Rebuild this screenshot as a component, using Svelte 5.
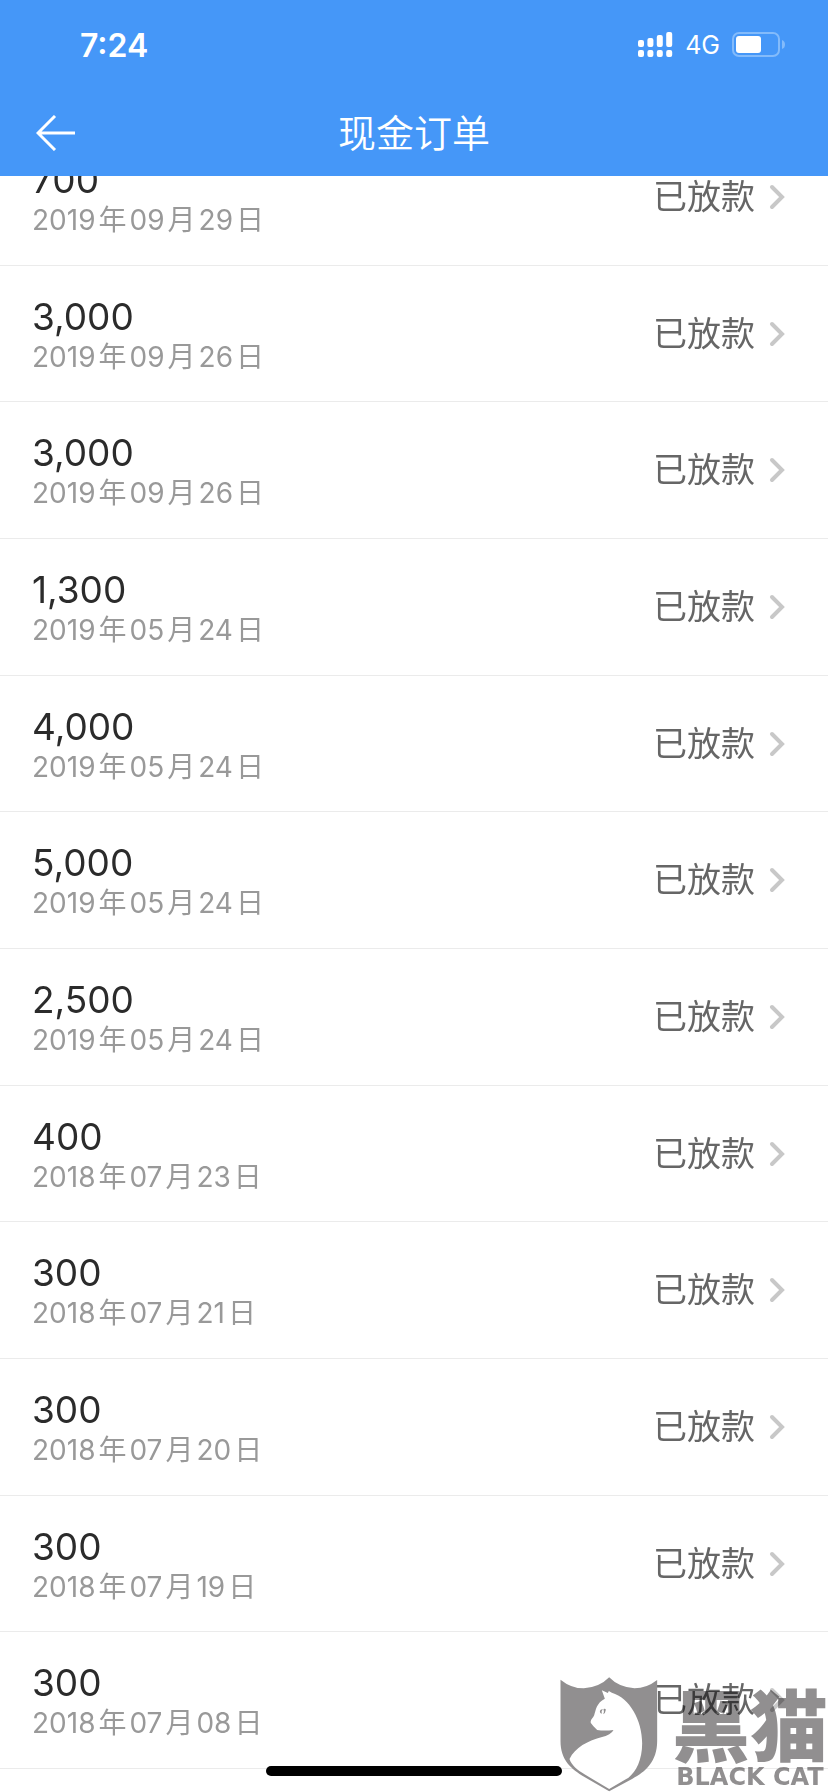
<script lang="ts">
let orders = [
  { amount: '700', date: '2019年09月29日', status: '已放款' },
  { amount: '3,000', date: '2019年09月26日', status: '已放款' },
  { amount: '3,000', date: '2019年09月26日', status: '已放款' },
  { amount: '1,300', date: '2019年05月24日', status: '已放款' },
  { amount: '4,000', date: '2019年05月24日', status: '已放款' },
  { amount: '5,000', date: '2019年05月24日', status: '已放款' },
  { amount: '2,500', date: '2019年05月24日', status: '已放款' },
  { amount: '400', date: '2018年07月23日', status: '已放款' },
  { amount: '300', date: '2018年07月21日', status: '已放款' },
  { amount: '300', date: '2018年07月20日', status: '已放款' },
  { amount: '300', date: '2018年07月19日', status: '已放款' },
  { amount: '300', date: '2018年07月08日', status: '已放款' },
];

// signal columns, shortest first
let bars = [7, 9, 12, 15];

// numbers and 年/月/日 apart, so they get some air between them
function dateParts(date: string) {
  return date.match(/\d+|\D/g) ?? [];
}
</script>

<style>
:global(body) {
  background: #fff;
}
.orders-page {
  position: relative;
  display: flex;
  flex-direction: column;
  min-height: 100vh;
  box-sizing: border-box;
  padding-bottom: 23px;
  overflow: hidden;
  color: #2b2b2b;
  font-family: Inter, 'Noto Sans CJK SC', sans-serif;
}
button {
  border: 0;
  padding: 0;
  background: none;
  color: inherit;
  font: inherit;
  cursor: pointer;
}
svg {
  display: block;
}

.top {
  position: sticky;
  top: 0;
  z-index: 1;
  background: #4597f8;
  color: #fff;
}
.status-bar {
  display: flex;
  align-items: center;
  justify-content: space-between;
  height: 90px;
  padding: 0 43px 0 80px;
}
.time {
  font-size: 32px;
  font-weight: 600;
}
.indicators {
  display: flex;
  align-items: center;
  gap: 12px;
  font-size: 25px;
  line-height: 32px;
}
.nav {
  display: grid;
  grid-template-columns: 80px 1fr 80px;
  align-items: center;
  height: 86px;
}
.back {
  padding-left: 36px;
}
h1 {
  margin: 0;
  text-align: center;
  font-size: 38px;
  line-height: 86px;
  font-weight: 350;
}

/* the list is scrolled part of a row under the header */
.orders {
  display: flex;
  flex: 1;
  flex-direction: column;
  margin: -47px 0 0;
  padding: 0;
  list-style: none;
}
.orders li {
  display: flex;
  flex: 1;
  border-bottom: 1px solid #ebebeb;
}
.order {
  display: flex;
  flex: 1;
  align-items: center;
  justify-content: space-between;
  padding: 24px 43px 24px 32px;
  text-align: left;
}
.amount {
  display: block;
  font-size: 37px;
  line-height: 46px;
}
.date {
  display: flex;
  gap: 3px;
  color: #999;
  font-size: 28px;
  line-height: 34px;
  font-weight: 400;
}
.status {
  display: flex;
  align-items: center;
  gap: 14px;
  color: #666;
  font-size: 34px;
  line-height: 44px;
  font-weight: 400;
}

.home-indicator {
  position: absolute;
  bottom: 16px;
  left: 50%;
  width: 296px;
  height: 10px;
  margin-left: -148px;
  border-radius: 5px;
  background: #000;
}
.watermark {
  position: absolute;
  right: 0;
  bottom: 0;
  display: flex;
  align-items: flex-end;
  gap: 14px;
  color: #918f90;
  pointer-events: none;
}
.brand {
  display: flex;
  flex-direction: column;
  align-items: center;
  mix-blend-mode: multiply;
}
.brand-cn {
  font-family: 'Noto Sans CJK SC', sans-serif;
  font-size: 78px;
  line-height: 80px;
  font-weight: 900;
}
.brand-en {
  font-family: 'DejaVu Sans', sans-serif;
  font-size: 24px;
  line-height: 30px;
  font-weight: 700;
}
</style>

<div class="orders-page">
  <header class="top">
    <div class="status-bar">
      <span class="time">7:24</span>
      <div class="indicators">
        <svg width="35" height="26" viewBox="0 0 35 26" fill="currentColor" aria-hidden="true">
          {#each bars as h, i}
            <rect x={i * 9.4} y={15 - h} width="6" height={h} rx="2" />
            <rect x={i * 9.4} y="18" width="6" height="7" rx="2" />
          {/each}
        </svg>
        <span>4G</span>
        <svg width="53" height="26" viewBox="0 0 53 26" aria-hidden="true">
          <rect x="1" y="1" width="46" height="23" rx="6" fill="none" stroke="#83bbfb" stroke-width="2" />
          <rect x="4" y="4" width="25" height="17" rx="3" fill="#fff" />
          <path d="M50 8q3 1 3 4.5t-3 4.5z" fill="#83bbfb" />
        </svg>
      </div>
    </div>
    <div class="nav">
      <button class="back" aria-label="返回">
        <svg width="40" height="36" viewBox="0 0 40 36" fill="none" stroke="currentColor" stroke-width="3">
          <path d="M19 1L2 18l17 17M2 18h37" />
        </svg>
      </button>
      <h1>现金订单</h1>
    </div>
  </header>

  <ul class="orders">
    {#each orders as o}
      <li>
        <button class="order">
          <span>
            <span class="amount">{o.amount}</span>
            <span class="date">
              {#each dateParts(o.date) as part}<span>{part}</span>{/each}
            </span>
          </span>
          <span class="status">
            {o.status}
            <svg width="16" height="26" viewBox="0 0 16 26" fill="none" stroke="#c8c8c8" stroke-width="4" stroke-linecap="round">
              <path d="M3 3l10 10L3 23" />
            </svg>
          </span>
        </button>
      </li>
    {/each}
  </ul>

  <div class="home-indicator"></div>

  <div class="watermark">
    <svg width="98" height="115" viewBox="27 36 293 345" aria-hidden="true">
      <path
        d="M28 44Q60 70 98 70Q145 67 174 37Q203 67 250 70Q286 70 318 45V228C318 290 282 321 244 341L174 379L100 336C60 312 28 285 28 228Z"
        fill="#918f90"
      />
      <path
        d="M152 76L170 84L173 78L182 83C235 98 273 165 273 235C273 285 255 320 232 338L174 372L100 328C78 314 62 302 55 282C72 247 110 228 150 217Q180 210 187 195Q160 198 138 195Q125 183 119 174C116 164 126 160 129 151C134 135 136 113 161 101Z"
        fill="#fff"
      />
      <path d="M146 139Q148 132 155 133Q149 138 152 146Q146 146 146 139ZM157 132Q163 130 164 134Q163 144 156 148Q160 140 157 132Z" fill="#918f90" />
    </svg>
    <div class="brand">
      <span class="brand-cn">黑猫</span>
      <span class="brand-en">BLACK CAT</span>
    </div>
  </div>
</div>
